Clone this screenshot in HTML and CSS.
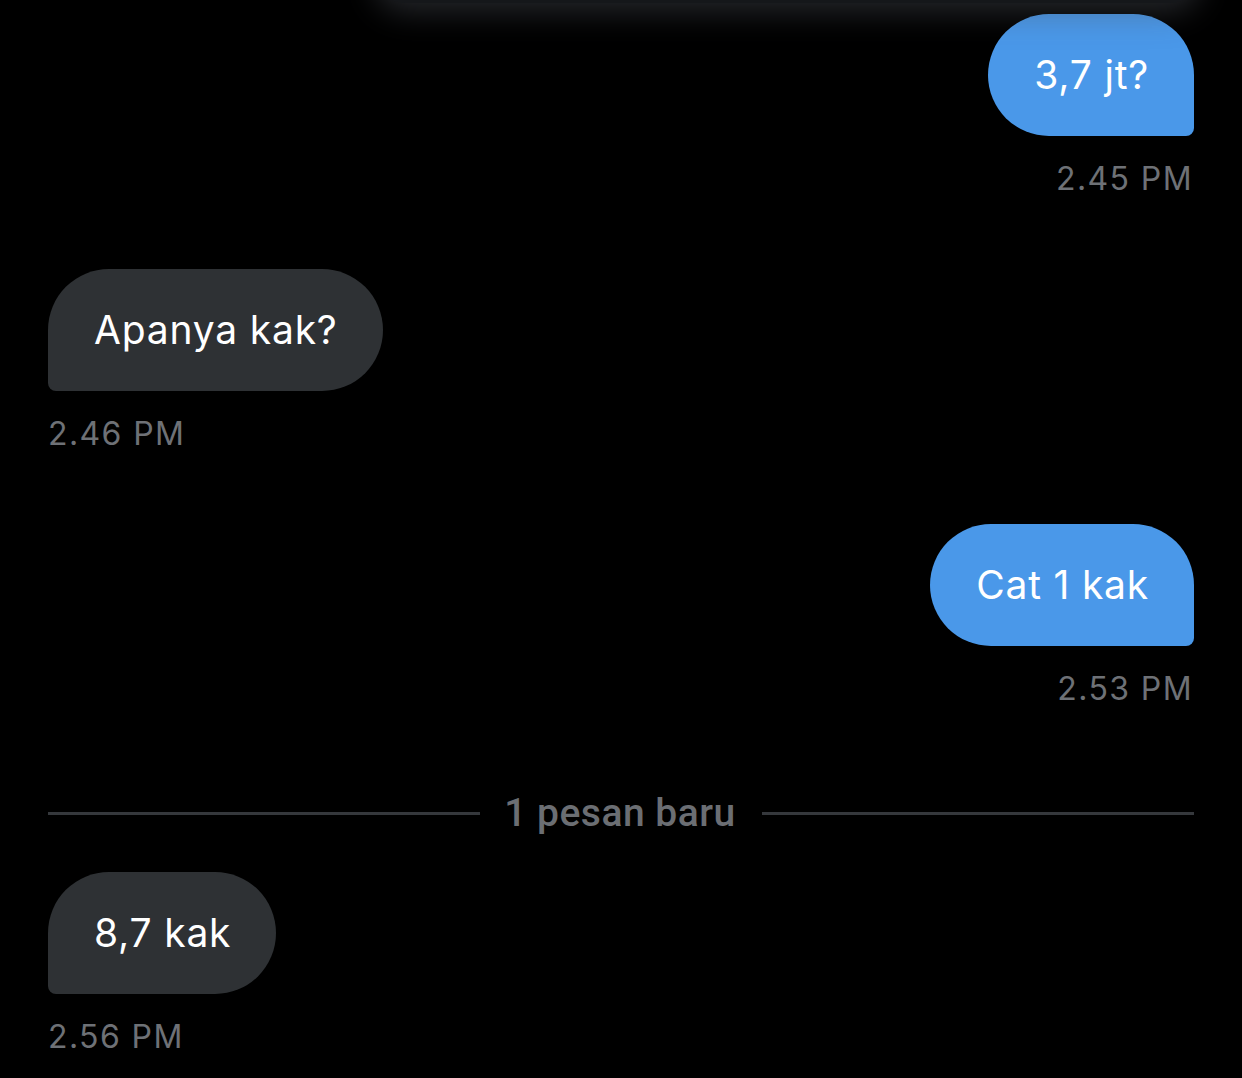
FILE: index.html
```html
<!DOCTYPE html>
<html lang="id">
<head>
<meta charset="utf-8">
<title>Chat</title>
<link rel="stylesheet" href="styles.css">
</head>
<body>
<div class="topbar"></div>
<main class="chat">
  <div class="msg out">
    <div class="bubble">3,7 jt?</div>
    <div class="time">2.45 PM</div>
  </div>
  <div class="msg in">
    <div class="bubble">Apanya kak?</div>
    <div class="time">2.46 PM</div>
  </div>
  <div class="msg out">
    <div class="bubble">Cat 1 kak</div>
    <div class="time">2.53 PM</div>
  </div>
  <div class="divider">
    <span class="line"></span>
    <span class="label">1 pesan baru</span>
    <span class="line"></span>
  </div>
  <div class="msg in last">
    <div class="bubble">8,7 kak</div>
    <div class="time">2.56 PM</div>
  </div>
</main>
</body>
</html>
```
FILE: styles.css
```css
html, body {
  margin: 0;
  padding: 0;
  background: #000;
  height: 100%;
  overflow: hidden;
}
body {
  font-family: Inter, "Noto Sans", sans-serif;
  position: relative;
}
.topbar {
  position: absolute;
  top: -60px;
  left: 375px;
  width: 825px;
  height: 63px;
  border-radius: 30px;
  background: #15171a;
  box-shadow: 0 8px 32px rgba(75, 80, 88, 0.5);
}
.chat {
  display: flex;
  flex-direction: column;
  padding: 14px 48px 0;
}
.msg {
  display: flex;
  flex-direction: column;
  margin-bottom: 70px;
}
.msg.out { align-items: flex-end; }
.msg.in { align-items: flex-start; }
.bubble {
  height: 122px;
  line-height: 122px;
  padding: 0 45px 0 46px;
  font-size: 39px;
  color: #fff;
  box-sizing: border-box;
  letter-spacing: 0.8px;
}
.out .bubble {
  background: #4a98e9;
  border-radius: 61px 61px 8px 61px;
}
.in .bubble {
  background: #2e3134;
  border-radius: 61px 61px 61px 8px;
}
.time {
  margin-top: 23px;
  line-height: 40px;
  font-size: 32px;
  letter-spacing: 1.4px;
  color: #6e7176;
}
.out .time { margin-right: 1px; }
.msg.out:nth-child(3) { margin-bottom: 82px; }
.divider {
  display: flex;
  align-items: center;
  height: 44px;
  margin-bottom: 37px;
}
.divider .line {
  flex: 1;
  height: 3px;
  background: #35383c;
}
.divider .label {
  padding: 0 26px 0 24px;
  font-family: Roboto, "Noto Sans", sans-serif;
  font-weight: 500;
  font-size: 39px;
  letter-spacing: 0.5px;
  color: #6b6e73;
  line-height: 44px;
}
```
